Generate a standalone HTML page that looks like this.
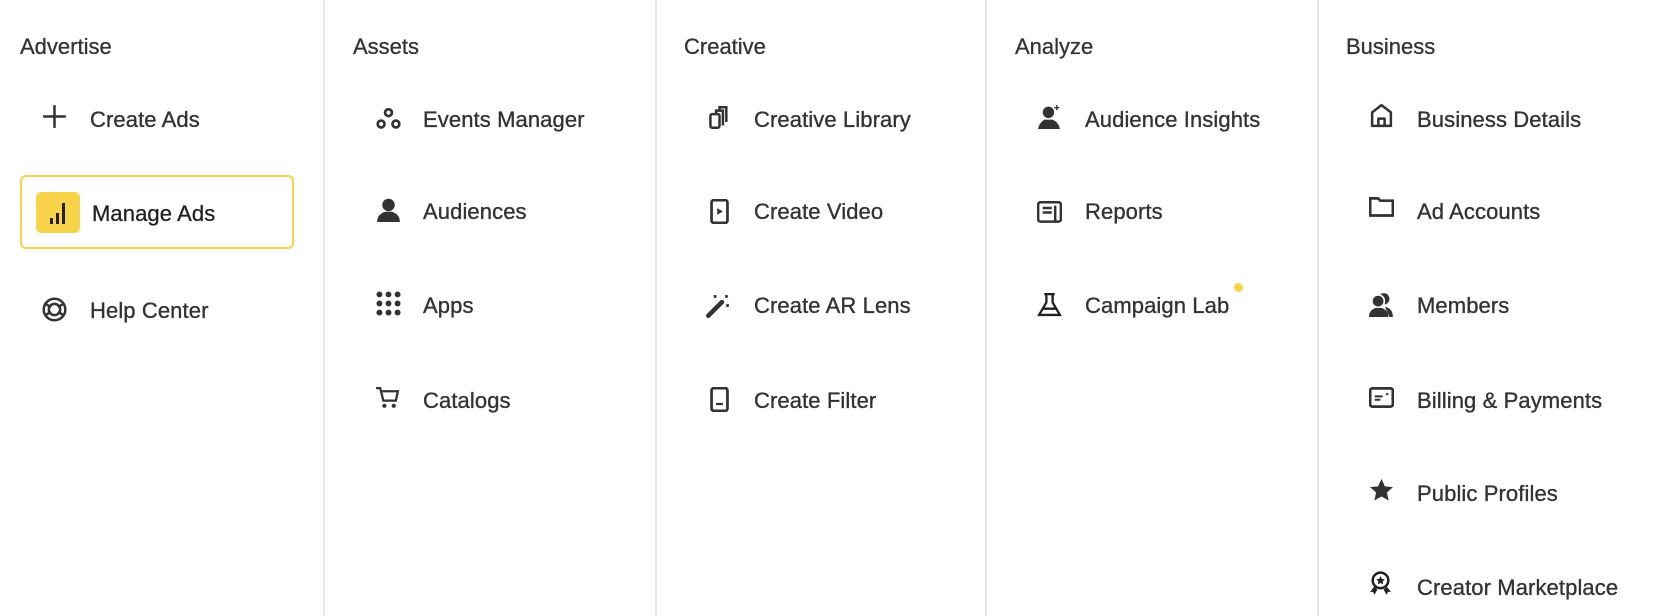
<!DOCTYPE html>
<html><head><style>
body{margin:0;width:1662px;height:616px;background:#fff;position:relative;overflow:hidden;font-family:"Liberation Sans",sans-serif;color:#333}
.h{position:absolute;font-size:22px;top:34px;-webkit-text-stroke:0.3px #333}
.t{position:absolute;font-size:22px;line-height:24px;-webkit-text-stroke:0.35px #333;letter-spacing:0.1px}
.i{position:absolute;width:25px;height:25px}
.d{position:absolute;top:0;width:2px;height:616px;background:#e8e8e8}
</style></head><body>
<div class="d" style="left:323px"></div>
<div class="d" style="left:655px"></div>
<div class="d" style="left:985px"></div>
<div class="d" style="left:1317px"></div>

<div class="h" style="left:20px">Advertise</div>
<div class="h" style="left:353px">Assets</div>
<div class="h" style="left:684px">Creative</div>
<div class="h" style="left:1015px">Analyze</div>
<div class="h" style="left:1346px">Business</div>

<!-- Advertise -->
<svg class="i" style="left:42px;top:104px" viewBox="0 0 22 22"><path d="M11 1v20M1 11h20" stroke="#333" stroke-width="2.2"/></svg>
<div class="t" style="left:90px;top:108px">Create Ads</div>
<div style="position:absolute;left:20px;top:175px;width:274px;height:74px;border:2px solid #f7d34a;border-radius:6px;box-sizing:border-box"></div>
<div style="position:absolute;left:36px;top:192px;width:44px;height:41px;background:#f8d34a;border-radius:5px"></div>
<svg style="position:absolute;left:48px;top:200px" width="20" height="26" viewBox="0 0 20 26"><rect x="2" y="18" width="3" height="6" fill="#222"/><rect x="8" y="13" width="3" height="11" fill="#222"/><rect x="14" y="3" width="3" height="21" fill="#222"/></svg>
<div class="t" style="left:92px;top:202px;color:#1f1f1f">Manage Ads</div>
<svg class="i" style="left:42px;top:297px" viewBox="0 0 22 22"><circle cx="11" cy="11" r="9.5" fill="none" stroke="#333" stroke-width="2.2"/><circle cx="11" cy="11" r="5" fill="none" stroke="#333" stroke-width="2.2"/><path d="M3 6l5 3M19 6l-5 3M3 16l5-3M19 16l-5-3" stroke="#333" stroke-width="2.2"/></svg>
<div class="t" style="left:90px;top:299px">Help Center</div>

<!-- Assets -->
<svg class="i" style="left:376px;top:107px" viewBox="0 0 22 22"><g fill="none" stroke="#333" stroke-width="2.4"><circle cx="11" cy="5" r="3"/><circle cx="4.5" cy="15" r="3"/><circle cx="17.5" cy="15" r="3"/></g></svg>
<div class="t" style="left:423px;top:108px">Events Manager</div>
<svg class="i" style="left:376px;top:197px" viewBox="0 0 22 22"><circle cx="11" cy="7" r="5.5" fill="#333"/><path d="M1 22c0-6 4-8 7-9h6c3 1 7 3 7 9z" fill="#333"/></svg>
<div class="t" style="left:423px;top:200px">Audiences</div>
<svg class="i" style="left:376px;top:291px" viewBox="0 0 22 22"><g fill="#333"><circle cx="3" cy="3" r="2.6"/><circle cx="11" cy="3" r="2.6"/><circle cx="19" cy="3" r="2.6"/><circle cx="3" cy="11" r="2.6"/><circle cx="11" cy="11" r="2.6"/><circle cx="19" cy="11" r="2.6"/><circle cx="3" cy="19" r="2.6"/><circle cx="11" cy="19" r="2.6"/><circle cx="19" cy="19" r="2.6"/></g></svg>
<div class="t" style="left:423px;top:294px">Apps</div>
<svg class="i" style="left:375px;top:385px" viewBox="0 0 24 24"><path d="M1 3h4l3 12h12l2-9H7" fill="none" stroke="#333" stroke-width="2.2"/><circle cx="9" cy="20" r="2" fill="#333"/><circle cx="18" cy="20" r="2" fill="#333"/></svg>
<div class="t" style="left:423px;top:389px">Catalogs</div>

<!-- Creative -->
<svg class="i" style="left:707px;top:105px" viewBox="0 0 22 22"><g fill="none" stroke="#333" stroke-width="2.2"><rect x="3" y="8" width="8" height="12" rx="1.5"/><path d="M8 8V5h6v13M11 5V2h6v13"/></g></svg>
<div class="t" style="left:754px;top:108px">Creative Library</div>
<svg class="i" style="left:707px;top:199px" viewBox="0 0 22 22"><rect x="4" y="1" width="14" height="20" rx="2" fill="none" stroke="#333" stroke-width="2.4"/><path d="M9 8l5 3-5 3z" fill="#333"/></svg>
<div class="t" style="left:754px;top:200px">Create Video</div>
<svg class="i" style="left:706px;top:293px" viewBox="0 0 22 22"><path d="M2 20L14 8" stroke="#333" stroke-width="4" stroke-linecap="round"/><path d="M7 2l2 2M9 2L7 4M17 2l2 2M19 2l-2 2M18 10l2 2M20 10l-2 2" stroke="#333" stroke-width="1.4"/></svg>
<div class="t" style="left:754px;top:294px">Create AR Lens</div>
<svg class="i" style="left:707px;top:387px" viewBox="0 0 22 22"><rect x="4" y="1" width="14" height="20" rx="2" fill="none" stroke="#333" stroke-width="2.4"/><path d="M8 15h6" stroke="#333" stroke-width="2"/></svg>
<div class="t" style="left:754px;top:389px">Create Filter</div>

<!-- Analyze -->
<svg class="i" style="left:1037px;top:104px" viewBox="0 0 24 24"><circle cx="11" cy="8" r="5.5" fill="#333"/><path d="M1 24c1-6 5-8 6-9h8c2 1 6 3 7 9z" fill="#333"/><path d="M19 1v5M16.5 3.5h5" stroke="#333" stroke-width="1.3"/></svg>
<div class="t" style="left:1085px;top:108px">Audience Insights</div>
<svg class="i" style="left:1037px;top:200px" viewBox="0 0 22 22"><rect x="1" y="2" width="20" height="17" rx="2" fill="none" stroke="#333" stroke-width="2.2"/><path d="M5 7h8M5 11h8M16 5v14" stroke="#333" stroke-width="2.2"/></svg>
<div class="t" style="left:1085px;top:200px">Reports</div>
<svg class="i" style="left:1037px;top:292px" viewBox="0 0 22 24"><path d="M6 2h10M8 2v8L1 22h20L14 10V2M4.5 16h13" fill="none" stroke="#1f1f1f" stroke-width="2.2"/></svg>
<div class="t" style="left:1085px;top:294px">Campaign Lab</div>
<div style="position:absolute;left:1234px;top:283px;width:9px;height:9px;border-radius:50%;background:#f8d34a"></div>

<!-- Business -->
<svg class="i" style="left:1369px;top:103px" viewBox="0 0 22 24"><path d="M2 22V9l9-7 9 7v13zM8 22v-7h6v7" fill="none" stroke="#333" stroke-width="2.4" stroke-linejoin="round"/></svg>
<div class="t" style="left:1417px;top:108px">Business Details</div>
<svg class="i" style="left:1369px;top:195px" viewBox="0 0 22 22"><path d="M1 3h7l2 2h11v13H1z" fill="none" stroke="#333" stroke-width="2.4"/></svg>
<div class="t" style="left:1417px;top:200px">Ad Accounts</div>
<svg class="i" style="left:1369px;top:292px" viewBox="0 0 22 22"><circle cx="13" cy="6" r="5" fill="#333"/><circle cx="8" cy="8" r="5.5" fill="#333" stroke="#fff" stroke-width="1.5"/><path d="M0 22c0-5 3-7 6-8h5c3 1 6 3 6 8z" fill="#333"/><path d="M14 13c4 1 7 3 7 9h-3" fill="#333"/></svg>
<div class="t" style="left:1417px;top:294px">Members</div>
<svg class="i" style="left:1369px;top:385px" viewBox="0 0 22 22"><rect x="1" y="3" width="20" height="16" rx="2" fill="none" stroke="#333" stroke-width="2.4"/><path d="M5 10h7M5 13h5M15 8h2" stroke="#333" stroke-width="1.8"/></svg>
<div class="t" style="left:1417px;top:389px">Billing &amp; Payments</div>
<svg class="i" style="left:1369px;top:478px" viewBox="0 0 24 24"><path d="M12 1l3.3 7 7.7.8-5.8 5.2 1.7 7.6L12 17.8 5.1 21.6l1.7-7.6L1 8.8 8.7 8z" fill="#333"/></svg>
<div class="t" style="left:1417px;top:482px">Public Profiles</div>
<svg class="i" style="left:1368px;top:571px" viewBox="0 0 22 24"><circle cx="11" cy="9" r="7.5" fill="none" stroke="#222" stroke-width="2.4"/><path d="M11 5l1.3 2.6 2.8.4-2 2 .5 2.8L11 11.5 8.4 12.8l.5-2.8-2-2 2.8-.4z" fill="#222"/><path d="M5 15l-4 5 3 0 1 3 3-5M17 15l4 5-3 0-1 3-3-5" fill="#222"/></svg>
<div class="t" style="left:1417px;top:576px">Creator Marketplace</div>
</body></html>
